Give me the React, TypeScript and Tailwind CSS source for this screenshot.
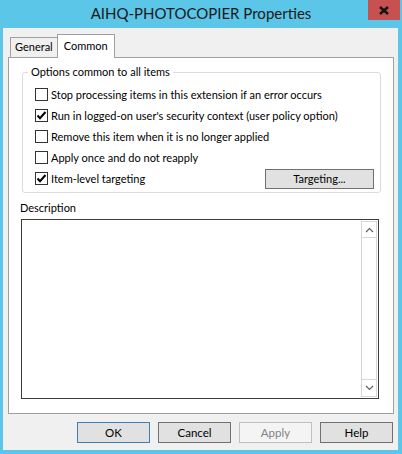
import React from "react";

const options = [
  { label: "Stop processing items in this extension if an error occurs", checked: false },
  { label: "Run in logged-on user's security context (user policy option)", checked: true },
  { label: "Remove this item when it is no longer applied", checked: false },
  { label: "Apply once and do not reapply", checked: false },
  { label: "Item-level targeting", checked: true },
];

function Checkbox({ checked }: { checked: boolean }) {
  return (
    <span className="w-[13px] h-[13px] border border-[#333333] bg-white flex items-center justify-center shrink-0">
      {checked && (
        <svg width="11" height="11" viewBox="0 0 11 11" fill="none">
          <path d="M1.5 5.5L4 8.2L9.5 2" stroke="#000" strokeWidth="2" />
        </svg>
      )}
    </span>
  );
}

function DialogButton({
  label,
  variant = "normal",
}: {
  label: string;
  variant?: "normal" | "default" | "disabled";
}) {
  const classes =
    variant === "default"
      ? "border-[#3c7fb1] bg-[#e1e1e1] text-black"
      : variant === "disabled"
        ? "border-[#bfbfbf] bg-[#f4f4f4] text-[#838383]"
        : "border-[#707070] bg-[#e1e1e1] text-black";
  return (
    <button
      type="button"
      className={`w-[73px] h-[21px] border text-[11.5px] leading-none flex items-center justify-center ${classes}`}
    >
      {label}
    </button>
  );
}

export default function App() {
  return (
    <div className="w-[402px] h-[454px] bg-[#5bc6e8] flex flex-col font-['Lato',sans-serif] text-black overflow-hidden">
      {/* Title bar */}
      <div className="h-[28px] shrink-0 relative flex items-center justify-center">
        <span className="text-[15px] leading-none text-[#1a1a1a] -mt-[2px]">
          AIHQ-PHOTOCOPIER Properties
        </span>
        <button
          type="button"
          className="absolute right-[2px] top-0 w-[32px] h-[20px] bg-[#c75050] flex items-center justify-center"
          aria-label="Close"
        >
          <svg width="10" height="9" viewBox="0 0 10 9">
            <path d="M1 1L9 8M9 1L1 8" stroke="#111" strokeWidth="2.4" />
          </svg>
        </button>
      </div>

      {/* Client area */}
      <div className="flex-1 ml-[3px] mr-[4px] mb-[4px] bg-[#f0f0f0] flex flex-col text-[11px]">
        {/* Tabs */}
        <div className="h-[29px] shrink-0 flex items-end pl-[7px] relative z-10">
          <div className="h-[20px] px-[4px] border border-b-0 border-[#a0a0a0] bg-[#f0f0f0] flex items-center">
            General
          </div>
          <div className="h-[24px] -mb-[1px] -ml-[1px] px-[6px] border border-b-0 border-[#a0a0a0] bg-white flex items-start pt-[3px]">
            Common
          </div>
        </div>

        {/* Panel */}
        <div className="h-[357px] ml-[5px] mr-[4px] bg-white border border-[#a0a0a0] flex flex-col">
          <fieldset className="mt-[6px] ml-[13px] mr-[12px] border border-[#dcdcdc] rounded-[3px] pb-[3px]">
            <legend className="ml-[5px] px-[3px] leading-[16px]">Options common to all items</legend>
            <div className="pt-[4px] pl-[12px] pr-[6px]">
              {options.map((o, i) => (
                <div key={i} className="h-[21px] flex items-center gap-[3px] whitespace-nowrap">
                  <Checkbox checked={o.checked} />
                  <span className="leading-none">{o.label}</span>
                  {i === options.length - 1 && (
                    <button
                      type="button"
                      className="ml-auto w-[109px] h-[20px] border border-[#707070] bg-[#e1e1e1] flex items-center justify-center leading-none"
                    >
                      Targeting...
                    </button>
                  )}
                </div>
              ))}
            </div>
          </fieldset>

          <div className="mt-[7px] ml-[11px] leading-[16px]">Description</div>

          <div className="mt-[3px] ml-[12px] mr-[14px] h-[180px] border border-[#3c3c3c] bg-white flex justify-end py-[1px] pr-[1px]">
            <div className="w-[16px] flex flex-col border border-[#d6d6d6]">
              <div className="h-[16px] border-b border-[#d6d6d6] flex items-center justify-center">
                <svg width="9" height="6" viewBox="0 0 9 6" fill="none">
                  <path d="M1 5L4.5 1.5L8 5" stroke="#606060" strokeWidth="1.2" />
                </svg>
              </div>
              <div className="flex-1" />
              <div className="h-[17px] border-t border-[#d6d6d6] flex items-center justify-center">
                <svg width="9" height="6" viewBox="0 0 9 6" fill="none">
                  <path d="M1 1L4.5 4.5L8 1" stroke="#606060" strokeWidth="1.2" />
                </svg>
              </div>
            </div>
          </div>
        </div>

        {/* Buttons */}
        <div className="mt-[8px] pr-[5px] flex justify-end gap-[8px]">
          <DialogButton label="OK" variant="default" />
          <DialogButton label="Cancel" />
          <DialogButton label="Apply" variant="disabled" />
          <DialogButton label="Help" />
        </div>
      </div>
    </div>
  );
}
